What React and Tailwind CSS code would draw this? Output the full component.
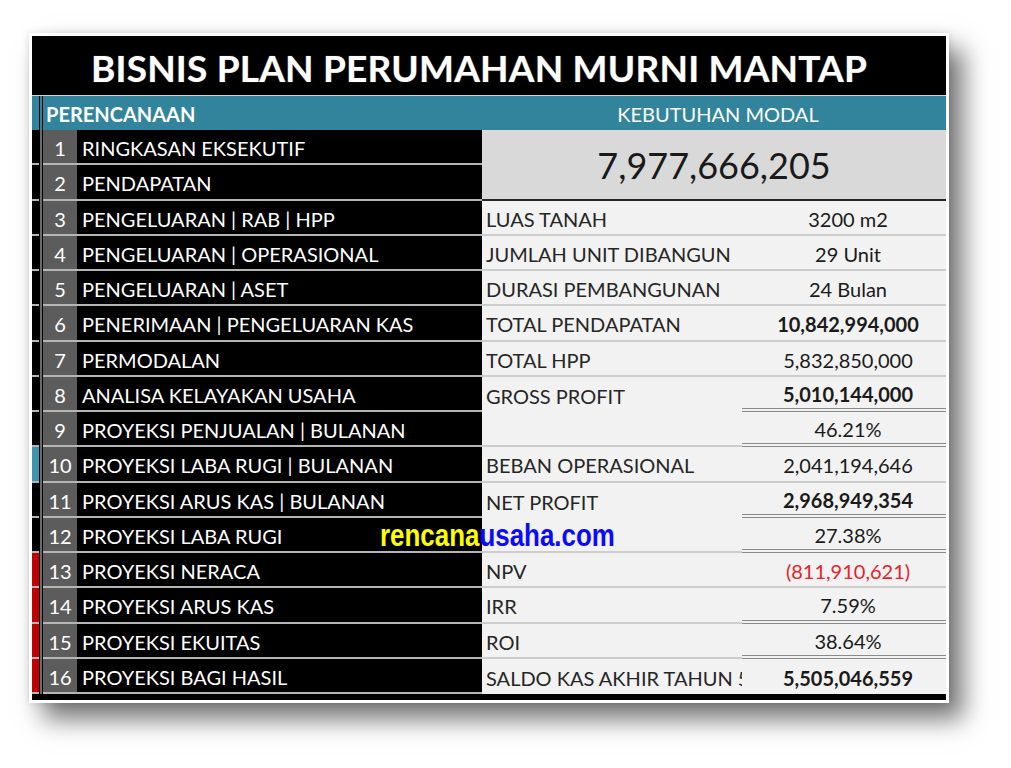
const leftRows = [
  { no: "1", label: "RINGKASAN EKSEKUTIF", mark: "bg-black" },
  { no: "2", label: "PENDAPATAN", mark: "bg-black" },
  { no: "3", label: "PENGELUARAN | RAB | HPP", mark: "bg-black" },
  { no: "4", label: "PENGELUARAN | OPERASIONAL", mark: "bg-black" },
  { no: "5", label: "PENGELUARAN | ASET", mark: "bg-black" },
  { no: "6", label: "PENERIMAAN | PENGELUARAN KAS", mark: "bg-black" },
  { no: "7", label: "PERMODALAN", mark: "bg-black" },
  { no: "8", label: "ANALISA KELAYAKAN USAHA", mark: "bg-black" },
  { no: "9", label: "PROYEKSI PENJUALAN | BULANAN", mark: "bg-black" },
  { no: "10", label: "PROYEKSI LABA RUGI | BULANAN", mark: "bg-[#3f95ad]" },
  { no: "11", label: "PROYEKSI ARUS KAS | BULANAN", mark: "bg-black" },
  { no: "12", label: "PROYEKSI LABA RUGI", mark: "bg-black" },
  { no: "13", label: "PROYEKSI NERACA", mark: "bg-[#c00000]" },
  { no: "14", label: "PROYEKSI ARUS KAS", mark: "bg-[#c00000]" },
  { no: "15", label: "PROYEKSI EKUITAS", mark: "bg-[#c00000]" },
  { no: "16", label: "PROYEKSI BAGI HASIL", mark: "bg-[#c00000]" },
];

// rows 3..16 of the summary side
const rightRows = [
  { label: "LUAS TANAH", value: "3200 m2" },
  { label: "JUMLAH UNIT DIBANGUN", value: "29 Unit" },
  { label: "DURASI PEMBANGUNAN", value: "24 Bulan" },
  { label: "TOTAL PENDAPATAN", value: "10,842,994,000", bold: true },
  { label: "TOTAL HPP", value: "5,832,850,000" },
  { label: "GROSS PROFIT", value: "5,010,144,000", bold: true, double: true, merged: true },
  { label: "", value: "46.21%", double: true },
  { label: "BEBAN OPERASIONAL", value: "2,041,194,646" },
  { label: "NET PROFIT", value: "2,968,949,354", bold: true, double: true, merged: true },
  { label: "", value: "27.38%", double: true },
  { label: "NPV", value: "(811,910,621)", red: true },
  { label: "IRR", value: "7.59%", double: true },
  { label: "ROI", value: "38.64%", double: true },
  { label: "SALDO KAS AKHIR TAHUN 5", value: "5,505,046,559", bold: true, last: true },
];

function LeftRow({ row }) {
  return (
    <div className="flex h-[35.25px]">
      <div className={`w-[7px] border-b-2 border-[#b5b5b5] ${row.mark}`} />
      <div className="w-[4px] border-x border-black bg-[#6b6b6b]" />
      <div className="flex w-[34px] items-center justify-center border-b-2 border-[#b5b5b5] bg-[#5c5c5c] pt-[3px] text-white">
        {row.no}
      </div>
      <div className="flex w-[405px] items-center border-b-2 border-[#b5b5b5] bg-black pl-[5px] pt-[3px] whitespace-nowrap text-white">
        {row.label}
      </div>
    </div>
  );
}

function RightRow({ row }) {
  let labelBorder = "border-b-2 border-[#cdcdcd]";
  if (row.merged) labelBorder = "";
  if (row.last) labelBorder = "";
  let valueBorder = "border-b-2 border-[#cdcdcd]";
  if (row.double) valueBorder = "border-b-4 border-double border-[#8a8a8a]";
  if (row.last) valueBorder = "";
  return (
    <div className="flex h-[35.25px] bg-[#f2f2f2]">
      <div className={`flex w-[260px] items-center overflow-hidden pl-[4px] pt-[3px] whitespace-nowrap text-[#262626] ${labelBorder}`}>
        {row.label}
      </div>
      <div
        className={`flex w-[204px] items-center justify-center pl-[8px] pt-[3px] whitespace-nowrap ${valueBorder} ${
          row.red ? "text-[#e8222b]" : "text-[#1a1a1a]"
        } ${row.bold ? "font-bold" : ""}`}
      >
        {row.value}
      </div>
    </div>
  );
}

export default function App() {
  return (
    <div className="min-h-screen bg-white pl-[29px] pt-[33px] font-['Lato',sans-serif] text-[20px]">
      <div className="relative w-[920px] border-[3px] border-white shadow-[14px_16px_24px_rgba(0,0,0,0.55),0_0_8px_rgba(0,0,0,0.12)]">
        {/* title */}
        <div className="flex h-[60px] items-center justify-center border-b border-[#d4d4d4] bg-black pr-[20px] pt-[4px]">
          <h1 className="text-[37px] font-bold tracking-[0.2px] text-white [text-shadow:0_0_3px_#000,0_0_1px_#fff6e0]">
            BISNIS PLAN PERUMAHAN MURNI MANTAP
          </h1>
        </div>

        <div className="flex">
          {/* left: daftar perencanaan */}
          <div className="w-[450px]">
            <div className="flex h-[34px] bg-[#31849b]">
              <div className="w-[7px]" />
              <div className="w-[4px] border-x border-black" />
              <div className="flex items-center pl-[3px] pt-[2px] font-bold text-white">PERENCANAAN</div>
            </div>
            {leftRows.map((row) => (
              <LeftRow key={row.no} row={row} />
            ))}
          </div>

          {/* right: kebutuhan modal */}
          <div className="w-[464px]">
            <div className="flex h-[34px] items-center justify-center bg-[#31849b] pl-[8px] pt-[2px] text-white">
              KEBUTUHAN MODAL
            </div>
            <div className="flex h-[70.5px] items-center justify-center border-b-2 border-[#262626] bg-[#d9d9d9] pt-[2px] text-[36px] text-[#1a1a1a]">
              7,977,666,205
            </div>
            {rightRows.map((row, i) => (
              <RightRow key={i} row={row} />
            ))}
          </div>
        </div>

        <div className="h-[6px] bg-black" />

        {/* watermark */}
        <div className="absolute left-[348px] top-[483px] origin-left scale-x-[0.81] font-['Liberation_Sans',Arial,sans-serif] text-[32px] font-bold leading-none whitespace-nowrap">
          <span className="text-[#ffff00]">rencana</span>
          <span className="text-[#0a0aff]">usaha.com</span>
        </div>
      </div>
    </div>
  );
}
